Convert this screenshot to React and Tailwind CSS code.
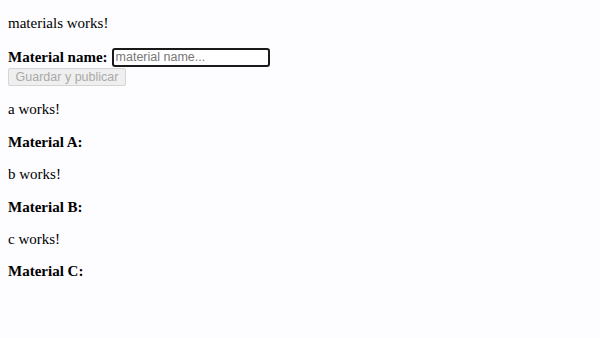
import React from "react";

const serif = { fontFamily: '"Liberation Serif", "Times New Roman", serif' };

function Section({ letter }) {
  return (
    <div>
      <p className="mt-[15px] mb-[15px] leading-[17.4px] text-[15px]">{letter.toLowerCase()} works!</p>
      <p className="mt-[15px] mb-[15px] leading-[17.4px] text-[15px] font-bold">Material {letter}:</p>
    </div>
  );
}

export default function App() {
  return (
    <div
      className="min-h-[338px] bg-[#fdfcfe] text-black px-[8px] pt-px font-['Liberation_Serif',serif]"
      style={serif}
    >
      <p className="mt-[14px] mb-[15px] leading-[17.4px] text-[15px]">materials works!</p>

      <div className="flex flex-col items-start">
        <div className="flex items-center gap-[4px] h-[20px]">
          <span className="text-[15px] font-bold leading-[17.4px]">Material name:</span>
          <input
            placeholder="material name..."
            className="w-[158px] h-[19px] border-2 border-[#1a1a1a] rounded-[3px] bg-white px-[2px] text-[12.5px] leading-none text-black placeholder:text-[#777] outline-none font-['Liberation_Sans',Arial,sans-serif]"
          />
        </div>
        <button
          disabled
          className="mt-[1px] h-[18px] w-[118px] px-[6px] bg-[#efefef] border border-[#d4d4d4] rounded-[2px] text-[12.5px] leading-none text-[#a9a9a9] font-['Liberation_Sans',Arial,sans-serif]"
        >
          Guardar y publicar
        </button>
      </div>

      <Section letter="A" />
      <Section letter="B" />
      <Section letter="C" />
    </div>
  );
}
